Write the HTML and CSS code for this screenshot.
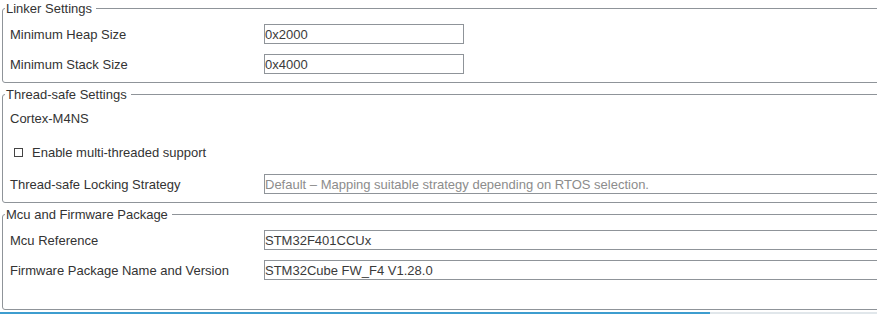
FILE: index.html
```html
<!DOCTYPE html>
<html>
<head>
<meta charset="utf-8">
<link rel="stylesheet" href="styles.css">
</head>
<body>
<div class="panel">
  <fieldset class="group group-linker">
    <legend class="group-title">Linker Settings</legend>
    <div class="row">
      <span class="label">Minimum Heap Size</span>
      <input class="field field-short" type="text" value="0x2000">
    </div>
    <div class="row">
      <span class="label">Minimum Stack Size</span>
      <input class="field field-short" type="text" value="0x4000">
    </div>
  </fieldset>

  <fieldset class="group group-thread">
    <legend class="group-title">Thread-safe Settings</legend>
    <div class="row">
      <span class="label">Cortex-M4NS</span>
    </div>
    <div class="row row-check">
      <label class="check"><input class="check-box" type="checkbox"><span>Enable multi-threaded support</span></label>
    </div>
    <div class="row row-last">
      <span class="label">Thread-safe Locking Strategy</span>
      <input class="field field-long" type="text" disabled value="Default – Mapping suitable strategy depending on RTOS selection.">
    </div>
  </fieldset>

  <fieldset class="group group-mcu">
    <legend class="group-title">Mcu and Firmware Package</legend>
    <div class="row">
      <span class="label">Mcu Reference</span>
      <input class="field field-long" type="text" value="STM32F401CCUx">
    </div>
    <div class="row">
      <span class="label">Firmware Package Name and Version</span>
      <input class="field field-long" type="text" value="STM32Cube FW_F4 V1.28.0">
    </div>
  </fieldset>

  <div class="scrollbar"><div class="scrollbar-thumb"></div></div>
</div>
</body>
</html>
```

FILE: styles.css
```css
html, body {
  margin: 0;
  padding: 0;
  background: #ffffff;
}

body {
  font-family: "Liberation Sans", Arial, sans-serif;
  font-size: 13px;
  color: #333333;
}

.panel {
  width: 877px;
  height: 314px;
  overflow: hidden;
  padding-left: 2px;
  box-sizing: border-box;
  display: flex;
  flex-direction: column;
}

.group {
  width: 920px;
  margin: 0;
  padding: 0 0 3px 0;
  border: 1px solid #8f9499;
  border-radius: 3px 0 0 3px;
  min-inline-size: 0;
  box-sizing: border-box;
  flex: none;
}

.group + .group {
  margin-top: 3px;
}

.group-title {
  margin-left: 2px;
  padding: 0 4px 0 1px;
  line-height: 17px;
  height: 17px;
  color: #333333;
}

.group-linker {
  padding-top: 2px;
}

.group-thread .row-check {
  margin-top: 4px;
}

.group-thread .row-last {
  margin-top: 2px;
}

.group-mcu {
  padding-top: 2px;
  padding-bottom: 24px;
}

.row {
  display: grid;
  grid-template-columns: 254px auto;
  align-items: center;
  height: 30px;
  padding-left: 7px;
}

.label {
  white-space: nowrap;
}

.field {
  box-sizing: border-box;
  height: 20px;
  margin: 0;
  padding: 0;
  border: 1px solid #8f9499;
  border-radius: 0;
  background: #ffffff;
  font-family: "Liberation Sans", Arial, sans-serif;
  font-size: 13px;
  color: #3a3a3a;
  outline: none;
}

.field-short {
  width: 200px;
}

.field-long {
  width: 700px;
}

.field:disabled {
  color: #8c8c8c;
  background: #ffffff;
  -webkit-text-fill-color: #8c8c8c;
}

.check {
  display: flex;
  align-items: center;
  gap: 9px;
  padding-left: 4px;
  white-space: nowrap;
}

.check-box {
  -webkit-appearance: none;
  appearance: none;
  width: 9px;
  height: 9px;
  margin: 0;
  border: 1px solid #444444;
  background: #ffffff;
  box-sizing: border-box;
}

.scrollbar {
  margin-top: 2px;
  margin-left: -2px;
  height: 2px;
  width: 877px;
  background: #e1e7eb;
  flex: none;
}

.scrollbar-thumb {
  width: 710px;
  height: 100%;
  background: #3e9dcf;
}
```
